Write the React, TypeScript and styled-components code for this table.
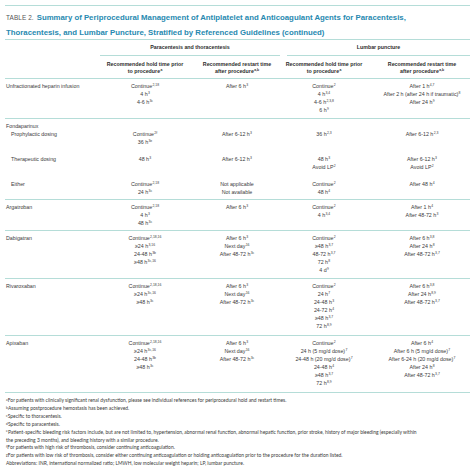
import React from 'react';
import styled, { createGlobalStyle } from 'styled-components';

const GlobalStyle = createGlobalStyle`
  html, body {
    margin: 0;
    padding: 0;
    background: #ffffff;
  }
  body {
    font-family: "Liberation Sans", Arial, sans-serif;
    color: #3a3a3a;
  }
`;

const RULE = '#b5ddd8';
const COLS = '91px 98px 86px 88px 102px';

type Entry = [string, string?];
type RowData = {
  label: string;
  indent?: boolean;
  cells: Entry[][];
  rule?: boolean;
  pt?: number;
  pb?: number;
};

const Page = styled.div`
  width: 465px;
  margin: 0 4px 0 5px;
  padding-top: 5px;
`;

const TitleBlock = styled.div`
  border-top: 1px solid ${RULE};
  border-bottom: 1px solid ${RULE};
  padding: 3px 1px 1px;
  line-height: 11.5px;
  white-space: nowrap;
`;

const TableTag = styled.span`
  font-size: 6.4px;
  color: #555;
  letter-spacing: 0.1px;
  margin-right: 3px;
`;

const TitleText = styled.span`
  font-size: 7.8px;
  font-weight: bold;
  color: #2789b0;
`;

const Grid = styled.div<{ $rule?: boolean; $pt?: number; $pb?: number }>`
  display: grid;
  grid-template-columns: ${COLS};
  padding: ${(p) => p.$pt ?? 3}px 0 ${(p) => p.$pb ?? 4}px;
  border-bottom: ${(p) => (p.$rule ? `1px solid ${RULE}` : 'none')};
`;

const GroupHead = styled.div<{ $col: number; $ml: number }>`
  grid-column: ${(p) => p.$col} / span 2;
  margin-left: ${(p) => p.$ml}px;
  border-bottom: 1px solid ${RULE};
  padding-bottom: 4px;
  text-align: center;
  font-size: 5.3px;
  font-weight: bold;
  line-height: 7px;
  height: 7px;
  color: #2e2e2e;
`;

const SubHead = styled.div<{ $shift?: number }>`
  display: flex;
  flex-direction: column;
  align-items: center;
  font-size: 5.3px;
  font-weight: bold;
  color: #2e2e2e;
  padding-left: ${(p) => p.$shift ?? 0}px;
`;

const HeadLine = styled.span`
  display: block;
  height: 7px;
  line-height: 7px;
  white-space: nowrap;
`;

const Label = styled.div<{ $indent?: boolean }>`
  font-size: 5.3px;
  padding-left: ${(p) => (p.$indent ? 6 : 1)}px;
  white-space: nowrap;
`;

const Cell = styled.div<{ $shift?: number }>`
  display: flex;
  flex-direction: column;
  align-items: center;
  font-size: 5.3px;
  padding-left: ${(p) => p.$shift ?? 0}px;
  white-space: nowrap;
`;

const Line = styled.span`
  display: block;
  height: 8px;
  line-height: 8px;
  overflow: visible;
`;

const Sup = styled.sup`
  font-size: 3.4px;
  line-height: 0;
  vertical-align: 1.8px;
  margin-left: 0.3px;
`;

const Notes = styled.div`
  border-bottom: 1px solid ${RULE};
  padding: 4px 1px 3px;
  font-family: Lato, "Liberation Sans", sans-serif;
  font-size: 4.95px;
  color: #3a3a3a;
`;

const Note = styled.div`
  line-height: 7.9px;
  min-height: 7.9px;
  white-space: pre-line;
`;

const NoteMark = styled.sup`
  font-size: 3.2px;
  line-height: 0;
  vertical-align: 1.2px;
  margin-right: 0.2px;
`;

const rows: RowData[] = [
  {
    label: 'Unfractionated heparin infusion',
    rule: true,
    cells: [
      [['Continue', '2,18'], ['4 h', '3'], ['4-6 h', '3c']],
      [['After 6 h', '3']],
      [['Continue', '2'], ['4 h', '3,4'], ['4-6 h', '2,3,8'], ['6 h', '9']],
      [['After 1 h', '4,7'], ['After 2 h (after 24 h if traumatic)', '8'], ['After 24 h', '9']],
    ],
  },
  { label: 'Fondaparinux', pb: 0, cells: [[], [], [], []] },
  {
    label: 'Prophylactic dosing',
    indent: true,
    pt: 0,
    pb: 9,
    cells: [
      [['Continue', '2f'], ['36 h', '3e']],
      [['After 6-12 h', '3']],
      [['36 h', '2,3']],
      [['After 6-12 h', '2,3']],
    ],
  },
  {
    label: 'Therapeutic dosing',
    indent: true,
    pt: 0,
    pb: 9,
    cells: [
      [['48 h', '3']],
      [['After 6-12 h', '3']],
      [['48 h', '3'], ['Avoid LP', '2']],
      [['After 6-12 h', '3'], ['Avoid LP', '2']],
    ],
  },
  {
    label: 'Either',
    indent: true,
    rule: true,
    pt: 0,
    pb: 3,
    cells: [
      [['Continue', '2,18'], ['24 h', '3c']],
      [['Not applicable'], ['Not available']],
      [['Continue', '2'], ['48 h', '4']],
      [['After 48 h', '4']],
    ],
  },
  {
    label: 'Argatroban',
    rule: true,
    pb: 3,
    cells: [
      [['Continue', '2,18'], ['4 h', '3'], ['48 h', '3c']],
      [['After 6 h', '3']],
      [['Continue', '2'], ['4 h', '3,4']],
      [['After 1 h', '4'], ['After 48-72 h', '3']],
    ],
  },
  {
    label: 'Dabigatran',
    rule: true,
    cells: [
      [['Continue', '2,18,16'], ['\u226524 h', '3,16'], ['24-48 h', '3b'], ['\u226548 h', '3c,16']],
      [['After 6 h', '3'], ['Next day', '16'], ['After 48-72 h', '3c']],
      [['Continue', '2'], ['\u226548 h', '3,7'], ['48-72 h', '3,7'], ['72 h', '8'], ['4 d', '9']],
      [['After 6 h', '3,8'], ['After 24 h', '8'], ['After 48-72 h', '3,7']],
    ],
  },
  {
    label: 'Rivaroxaban',
    rule: true,
    pb: 5,
    cells: [
      [['Continue', '2,18,16'], ['\u226524 h', '3c,16'], ['\u226548 h', '3c']],
      [['After 6 h', '3'], ['Next day', '16'], ['After 48-72 h', '3c']],
      [['Continue', '2'], ['24 h', '7'], ['24-48 h', '3'], ['24-72 h', '4'], ['\u226548 h', '3,7'], ['72 h', '8,9']],
      [['After 6 h', '3,8'], ['After 24 h', '8,9'], ['After 48-72 h', '3,7']],
    ],
  },
  {
    label: 'Apixaban',
    rule: true,
    pb: 5,
    cells: [
      [['Continue', '2,18,16'], ['\u226524 h', '3c,16'], ['24-48 h', '3b'], ['\u226548 h', '3c']],
      [['After 6 h', '3'], ['Next day', '16'], ['After 48-72 h', '3c']],
      [
        ['Continue', '2'],
        ['24 h (5 mg/d dose)', '7'],
        ['24-48 h (20 mg/d dose)', '7'],
        ['24-48 h', '4'],
        ['\u226548 h', '3,7'],
        ['72 h', '8,9'],
      ],
      [
        ['After 6 h', '4'],
        ['After 6 h (5 mg/d dose)', '7'],
        ['After 6-24 h (20 mg/d dose)', '7'],
        ['After 24 h', '8'],
        ['After 48-72 h', '3,7'],
      ],
    ],
  },
];

const notes: [string, string][] = [
  ['a', 'For patients with clinically significant renal dysfunction, please see individual references for periprocedural hold and restart times.'],
  ['b', 'Assuming postprocedure hemostasis has been achieved.'],
  ['c', 'Specific to thoracentesis.'],
  ['d', 'Specific to paracentesis.'],
  [
    'e',
    'Patient-specific bleeding risk factors include, but are not limited to, hypertension, abnormal renal function, abnormal hepatic function, prior stroke, history of major bleeding (especially within\nthe preceding 3 months), and bleeding history with a similar procedure.',
  ],
  ['f', 'For patients with high risk of thrombosis, consider continuing anticoagulation.'],
  ['g', 'For patients with low risk of thrombosis, consider either continuing anticoagulation or holding anticoagulation prior to the procedure for the duration listed.'],
];

const shifts = [0, 0, 0, 6];

const HeadCell = ({ top, bottom, sup, shift }: { top: string; bottom: string; sup: string; shift?: number }) => (
  <SubHead $shift={shift}>
    <HeadLine>{top}</HeadLine>
    <HeadLine>
      {bottom}
      <Sup>{sup}</Sup>
    </HeadLine>
  </SubHead>
);

export default function App() {
  return (
    <>
      <GlobalStyle />
      <Page>
        <TitleBlock>
          <TableTag>TABLE 2.</TableTag>
          <TitleText>
            Summary of Periprocedural Management of Antiplatelet and Anticoagulant Agents for Paracentesis,
            <br />
            Thoracentesis, and Lumbar Puncture, Stratified by Referenced Guidelines (continued)
          </TitleText>
        </TitleBlock>

        <Grid $pt={4} $pb={4}>
          <GroupHead $col={2} $ml={4}>Paracentesis and thoracentesis</GroupHead>
          <GroupHead $col={4} $ml={7}>Lumbar puncture</GroupHead>
        </Grid>

        <Grid $rule $pt={0.5} $pb={3.5}>
          <div />
          <HeadCell top="Recommended hold time prior" bottom="to procedure" sup="a" />
          <HeadCell top="Recommended restart time" bottom="after procedure" sup="a,b" />
          <HeadCell top="Recommended hold time prior" bottom="to procedure" sup="a" />
          <HeadCell top="Recommended restart time" bottom="after procedure" sup="a,b" shift={6} />
        </Grid>

        {rows.map((row) => (
          <Grid key={row.label} $rule={row.rule} $pt={row.pt} $pb={row.pb}>
            <Label $indent={row.indent}>
              <Line>{row.label}</Line>
            </Label>
            {row.cells.map((lines, i) => (
              <Cell key={i} $shift={shifts[i]}>
                {lines.map(([text, sup], j) => (
                  <Line key={j}>
                    {text}
                    {sup && <Sup>{sup}</Sup>}
                  </Line>
                ))}
              </Cell>
            ))}
          </Grid>
        ))}

        <Notes>
          {notes.map(([mark, text]) => (
            <Note key={mark}>
              <NoteMark>{mark}</NoteMark>
              {text}
            </Note>
          ))}
          <Note>Abbreviations: INR, international normalized ratio; LMWH, low molecular weight heparin; LP, lumbar puncture.</Note>
        </Notes>
      </Page>
    </>
  );
}
